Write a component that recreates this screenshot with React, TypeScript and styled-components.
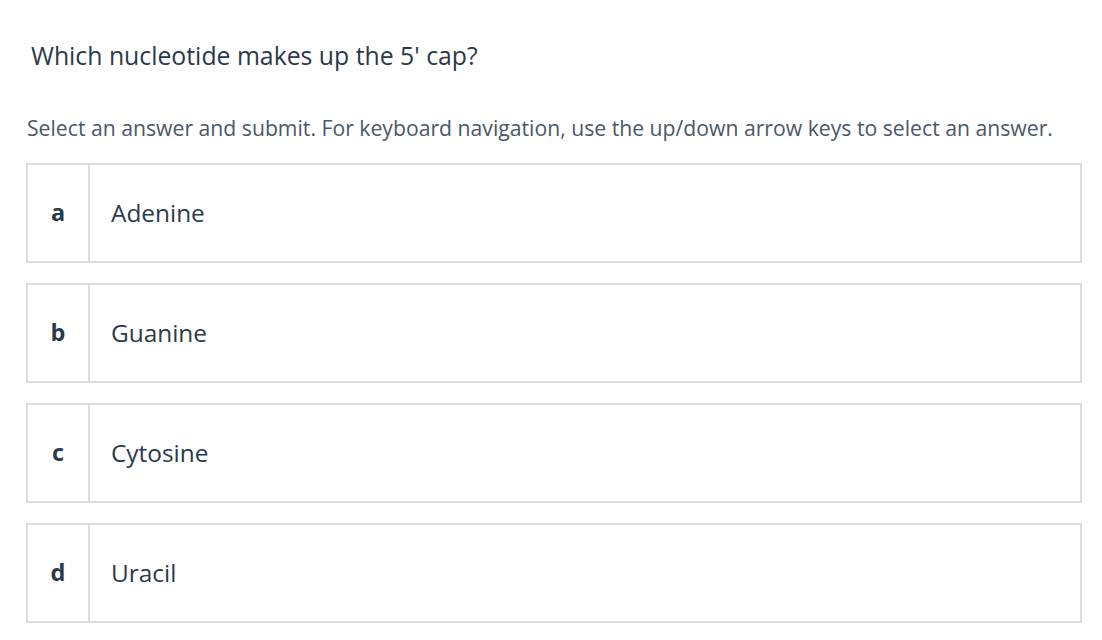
import React from "react";
import styled, { createGlobalStyle } from "styled-components";

const Global = createGlobalStyle`
  html, body { margin: 0; padding: 0; background: #fff; }
  body { font-family: "Open Sans", "Noto Sans", sans-serif; }
`;

const Page = styled.div`
  padding: 36px 20px 0 26px;
  width: 1056px;
`;

const Title = styled.h1`
  margin: 0 0 0 5px;
  font-size: 24.8px;
  font-weight: 400;
  line-height: 38px;
  color: #2b3a4a;
`;

const Instructions = styled.p`
  margin: 39px 0 0 1px;
  font-size: 21.2px;
  line-height: 30px;
  color: #4a5868;
  white-space: nowrap;
`;

const List = styled.div`
  margin-top: 20px;
  display: flex;
  flex-direction: column;
  gap: 20px;
`;

const Option = styled.div`
  display: flex;
  height: 100px;
  box-sizing: border-box;
  border: 2px solid #d8dde2;
  background: #fff;
`;

const Letter = styled.div`
  width: 60px;
  flex: none;
  display: flex;
  align-items: center;
  justify-content: center;
  border-right: 2px solid #d8dde2;
  font-size: 23.5px;
  font-weight: 700;
  color: #2b3a4a;
  padding-bottom: 2px;
`;

const Label = styled.div`
  flex: 1;
  display: flex;
  align-items: center;
  padding-left: 21px;
  font-size: 24.4px;
  color: #2b3a4a;
  padding-bottom: 2px;
`;

const options = [
  { key: "a", text: "Adenine" },
  { key: "b", text: "Guanine" },
  { key: "c", text: "Cytosine" },
  { key: "d", text: "Uracil" },
];

export default function App() {
  return (
    <>
      <Global />
      <Page>
        <Title>Which nucleotide makes up the 5' cap?</Title>
        <Instructions>
          Select an answer and submit. For keyboard navigation, use the up/down arrow keys to select an answer.
        </Instructions>
        <List>
          {options.map((o) => (
            <Option key={o.key}>
              <Letter>{o.key}</Letter>
              <Label>{o.text}</Label>
            </Option>
          ))}
        </List>
      </Page>
    </>
  );
}
